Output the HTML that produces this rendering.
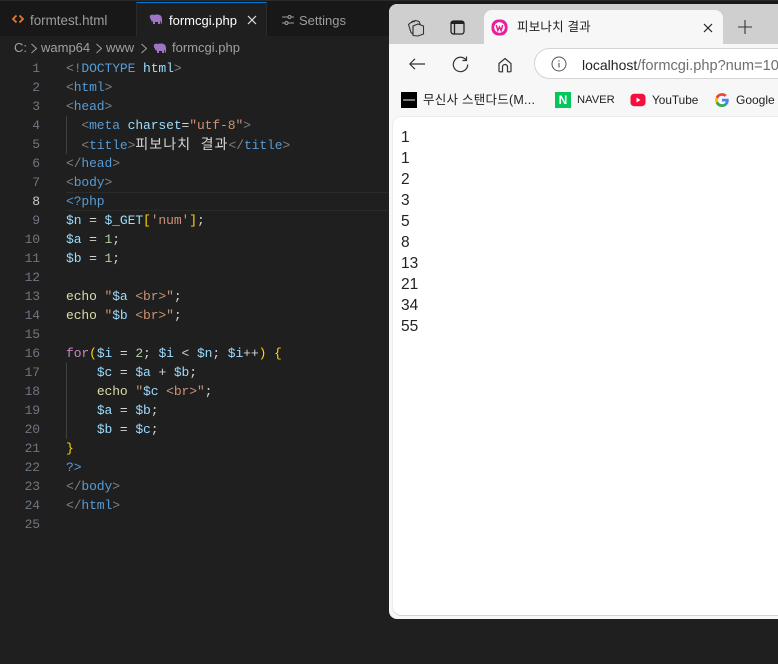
<!DOCTYPE html>
<html lang="ko">
<head>
<meta charset="utf-8">
<title>피보나치 결과</title>
<style>
html,body{margin:0;padding:0;background:#1f1f1f}
body{width:778px;height:664px;position:relative;overflow:hidden;font-family:"Liberation Sans","Noto Sans CJK KR",sans-serif}
.a{position:absolute;white-space:pre}
svg{position:absolute;display:block}
#tabbar{left:0;top:0;width:778px;height:36px;background:#181818;border-top:1px solid #2a2a2a;box-sizing:border-box}
#tab2{left:136px;top:2px;width:131px;height:34px;background:#1f1f1f;border-top:1px solid #0078d4;border-left:1px solid #2b2b2b;border-right:1px solid #2b2b2b;box-sizing:border-box}
.t{font-size:13px;line-height:18px;color:#9d9d9d}
.crumb{font-size:13px;line-height:18px;color:#a0a0a0}
.ln{position:absolute;left:0;width:40px;text-align:right;font:13px/19px "Liberation Mono",monospace;letter-spacing:-.1px;color:#6e7681}
.c{position:absolute;left:66px;font:13px/19px "Liberation Mono","Noto Sans CJK KR",monospace;letter-spacing:-.1px;white-space:pre;color:#cccccc}
.g{color:#808080}.b{color:#569cd6}.v{color:#9cdcfe}.s{color:#ce9178}.n{color:#b5cea8}.f{color:#dcdcaa}.k{color:#c586c0}.y{color:#ffd700}.w{color:#d4d4d4}.o{color:#da70d6}
.ko{font:14px/19px "Noto Sans CJK KR",sans-serif;letter-spacing:1.100px;word-spacing:4.300px;color:#d4d4d4}
#win{left:389px;top:4px;width:395px;height:615px;background:#f7f7f7;border-radius:8px 0 0 8px;overflow:hidden}
#strip{left:0;top:0;width:395px;height:40px;background:#cfcfcf}
#btab{left:95px;top:6px;width:239px;height:34px;background:#f7f7f7;border-radius:8px 8px 0 0}
#addr{left:145px;top:44px;width:260px;height:31px;background:#fff;border:1px solid #d4d4d4;border-radius:16px;box-sizing:border-box}
#page{left:4px;top:113px;width:400px;height:498px;background:#fff;border-radius:8px 0 0 8px;box-shadow:0 1px 0 #d4d4d4,-1px 0 0 #ececec,0 -1px 0 #ececec}
.bm{font-size:11.500px;line-height:16px;color:#1f1f1f}
#out{left:12px;top:123px;font-size:15.500px;line-height:21px;color:#222;white-space:pre}
</style>
</head>
<body>
<div class="a" id="tabbar"></div>
<div class="a" id="tab2"></div>

<svg style="left:12px;top:14px" width="12" height="10" viewBox="0 0 12 10"><path d="M4.500 1.500 1 5l3.500 3.500M7.500 1.500 11 5 7.500 8.500" fill="none" stroke="#e37933" stroke-width="1.800"/></svg>
<div class="a t" style="left:30px;top:12px;font-size:13.400px">formtest.html</div>

<svg style="left:149px;top:14px" width="14" height="11" viewBox="0 0 14 11"><path d="M1 1.500C3 .2 4 .5 5 1c2-.8 5-.8 6.500.5 1.300 1 1.500 3 1.500 5v3h-1V7l-.8.500V10H9V8H6v2H4V7.500C2.500 7.500 2 7 2 5.500 1 5 .5 3 1 1.500z" fill="#a074c4"/></svg>
<div class="a t" style="left:169px;top:12px;color:#fff">formcgi.php</div>
<svg style="left:247px;top:15px" width="10" height="10" viewBox="0 0 10 10"><path d="M1 1l8 8M9 1 1 9" stroke="#ddd" stroke-width="1.200"/></svg>

<svg style="left:282px;top:14px" width="12" height="12" viewBox="0 0 12 12"><path d="M0 3h6M9 3h3M0 9h3M6 9h6" stroke="#9d9d9d" stroke-width="1"/><circle cx="7.500" cy="3" r="1.500" fill="none" stroke="#9d9d9d"/><circle cx="4.500" cy="9" r="1.500" fill="none" stroke="#9d9d9d"/></svg>
<div class="a t" style="left:299px;top:12px">Settings</div>

<div class="a crumb" style="left:14px;top:39px">C:</div>
<svg style="left:30px;top:43px" width="8" height="11" viewBox="0 0 8 11"><path d="M1.500 1l5 4.500-5 4.500" fill="none" stroke="#a0a0a0"/></svg>
<div class="a crumb" style="left:41px;top:39px">wamp64</div>
<svg style="left:95px;top:43px" width="8" height="11" viewBox="0 0 8 11"><path d="M1.500 1l5 4.500-5 4.500" fill="none" stroke="#a0a0a0"/></svg>
<div class="a crumb" style="left:106px;top:39px">www</div>
<svg style="left:140px;top:43px" width="8" height="11" viewBox="0 0 8 11"><path d="M1.500 1l5 4.500-5 4.500" fill="none" stroke="#a0a0a0"/></svg>
<svg style="left:153px;top:43px" width="14" height="11" viewBox="0 0 14 11"><path d="M1 1.500C3 .2 4 .5 5 1c2-.8 5-.8 6.500.5 1.300 1 1.500 3 1.500 5v3h-1V7l-.8.500V10H9V8H6v2H4V7.500C2.500 7.500 2 7 2 5.500 1 5 .5 3 1 1.500z" fill="#a074c4"/></svg>
<div class="a crumb" style="left:172px;top:39px">formcgi.php</div>

<!-- current line and indent guides -->
<div class="a" style="left:66px;top:192px;width:330px;height:19px;box-sizing:border-box;border-top:1px solid #2b2b2b;border-bottom:1px solid #2b2b2b"></div>
<div class="a" style="left:66px;top:116px;width:1px;height:38px;background:#404040"></div>
<div class="a" style="left:66px;top:363px;width:1px;height:76px;background:#404040"></div>

<div class="ln" style="top:59px">1</div><div class="ln" style="top:78px">2</div><div class="ln" style="top:97px">3</div><div class="ln" style="top:116px">4</div><div class="ln" style="top:135px">5</div><div class="ln" style="top:154px">6</div><div class="ln" style="top:173px">7</div><div class="ln" style="top:192px;color:#ccc">8</div><div class="ln" style="top:211px">9</div><div class="ln" style="top:230px">10</div><div class="ln" style="top:249px">11</div><div class="ln" style="top:268px">12</div><div class="ln" style="top:287px">13</div><div class="ln" style="top:306px">14</div><div class="ln" style="top:325px">15</div><div class="ln" style="top:344px">16</div><div class="ln" style="top:363px">17</div><div class="ln" style="top:382px">18</div><div class="ln" style="top:401px">19</div><div class="ln" style="top:420px">20</div><div class="ln" style="top:439px">21</div><div class="ln" style="top:458px">22</div><div class="ln" style="top:477px">23</div><div class="ln" style="top:496px">24</div><div class="ln" style="top:515px">25</div>

<div class="c" style="top:59px"><span class="g">&lt;!</span><span class="b">DOCTYPE</span> <span class="v">html</span><span class="g">&gt;</span></div>
<div class="c" style="top:78px"><span class="g">&lt;</span><span class="b">html</span><span class="g">&gt;</span></div>
<div class="c" style="top:97px"><span class="g">&lt;</span><span class="b">head</span><span class="g">&gt;</span></div>
<div class="c" style="top:116px">  <span class="g">&lt;</span><span class="b">meta</span> <span class="v">charset</span><span class="w">=</span><span class="s">"utf-8"</span><span class="g">&gt;</span></div>
<div class="c" style="top:135px">  <span class="g">&lt;</span><span class="b">title</span><span class="g">&gt;</span><span class="ko">피보나치 결과</span><span class="g">&lt;/</span><span class="b">title</span><span class="g">&gt;</span></div>
<div class="c" style="top:154px"><span class="g">&lt;/</span><span class="b">head</span><span class="g">&gt;</span></div>
<div class="c" style="top:173px"><span class="g">&lt;</span><span class="b">body</span><span class="g">&gt;</span></div>
<div class="c" style="top:192px"><span class="b">&lt;?php</span></div>
<div class="c" style="top:211px"><span class="v">$n</span> <span class="w">=</span> <span class="v">$_GET</span><span class="y">[</span><span class="s">'num'</span><span class="y">]</span><span class="w">;</span></div>
<div class="c" style="top:230px"><span class="v">$a</span> <span class="w">=</span> <span class="n">1</span><span class="w">;</span></div>
<div class="c" style="top:249px"><span class="v">$b</span> <span class="w">=</span> <span class="n">1</span><span class="w">;</span></div>
<div class="c" style="top:287px"><span class="f">echo</span> <span class="s">"</span><span class="v">$a</span> <span class="s">&lt;br&gt;"</span><span class="w">;</span></div>
<div class="c" style="top:306px"><span class="f">echo</span> <span class="s">"</span><span class="v">$b</span> <span class="s">&lt;br&gt;"</span><span class="w">;</span></div>
<div class="c" style="top:344px"><span class="k">for</span><span class="y">(</span><span class="v">$i</span> <span class="w">=</span> <span class="n">2</span><span class="w">;</span> <span class="v">$i</span> <span class="w">&lt;</span> <span class="v">$n</span><span class="w">;</span> <span class="v">$i</span><span class="w">++</span><span class="y">)</span> <span class="y">{</span></div>
<div class="c" style="top:363px">    <span class="v">$c</span> <span class="w">=</span> <span class="v">$a</span> <span class="w">+</span> <span class="v">$b</span><span class="w">;</span></div>
<div class="c" style="top:382px">    <span class="f">echo</span> <span class="s">"</span><span class="v">$c</span> <span class="s">&lt;br&gt;"</span><span class="w">;</span></div>
<div class="c" style="top:401px">    <span class="v">$a</span> <span class="w">=</span> <span class="v">$b</span><span class="w">;</span></div>
<div class="c" style="top:420px">    <span class="v">$b</span> <span class="w">=</span> <span class="v">$c</span><span class="w">;</span></div>
<div class="c" style="top:439px"><span class="y">}</span></div>
<div class="c" style="top:458px"><span class="b">?&gt;</span></div>
<div class="c" style="top:477px"><span class="g">&lt;/</span><span class="b">body</span><span class="g">&gt;</span></div>
<div class="c" style="top:496px"><span class="g">&lt;/</span><span class="b">html</span><span class="g">&gt;</span></div>

<!-- browser window -->
<div class="a" id="win">
  <div class="a" id="strip"></div>
  <div class="a" id="btab"></div>

  <svg style="left:18px;top:15px" width="18" height="18" viewBox="0 0 18 18"><g fill="none" stroke="#333" stroke-width="1.100"><path d="M6 16.500 11 17 16.500 15V7L11 5 6 7z"/><path d="M6 7V15L4 13.500 1.500 5.500 6 2l2 1"/><path d="M3.800 3.800 8.500 1.500 12 2.500 13.500 6"/></g></svg>
  <svg style="left:61px;top:16px" width="15" height="15" viewBox="0 0 15 15"><rect x="1" y="1" width="13" height="13" rx="2.500" fill="none" stroke="#222" stroke-width="1.300"/><path d="M1.500 1.500h12v2.500H1.500z" fill="#222"/><path d="M4.500 3v11" stroke="#222" stroke-width="1.300"/></svg>

  <svg style="left:102px;top:15px" width="17" height="17" viewBox="0 0 17 17"><rect x=".5" y=".5" width="16" height="16" rx="7" fill="#e91e9c"/><path d="M8.500 3.200a5.300 5.300 0 1 0 .01 0z" fill="#fff"/><path d="M5.300 6 6.800 11.500 8.500 8 10.200 11.500 11.700 6" fill="none" stroke="#e91e9c" stroke-width="1.500"/></svg>
  <div class="a" style="left:128px;top:14px;font-size:12.500px;line-height:18px;color:#222;letter-spacing:.2px">피보나치 결과</div>
  <svg style="left:314px;top:19px" width="10" height="10" viewBox="0 0 10 10"><path d="M1 1l8 8M9 1 1 9" stroke="#222" stroke-width="1.200"/></svg>
  <svg style="left:349px;top:16px" width="14" height="14" viewBox="0 0 14 14"><path d="M7 0v14M0 7h14" stroke="#333" stroke-width="1.100"/></svg>

  <svg style="left:20px;top:54px" width="16" height="12" viewBox="0 0 16 12"><path d="M16 6H.8M6 .8.800 6 6 11.200" fill="none" stroke="#333" stroke-width="1.200"/></svg>
  <svg style="left:63px;top:52px" width="17" height="17" viewBox="0 0 17 17"><path d="M14 3.800A7.200 7.200 0 1 0 15.700 8.500" fill="none" stroke="#333" stroke-width="1.200"/><path d="M14.500 .5v4h-4" fill="none" stroke="#333" stroke-width="1.200"/></svg>
  <svg style="left:108px;top:53px" width="16" height="16" viewBox="0 0 16 16"><path d="M2 6.500 8 1.500l6 5V14a.8.800 0 0 1-.8.800H10.500V10a2.500 2.500 0 0 0-5 0v4.800H2.800A.8.800 0 0 1 2 14z" fill="none" stroke="#333" stroke-width="1.200"/></svg>

  <div class="a" id="addr"></div>
  <svg style="left:162px;top:52px" width="16" height="16" viewBox="0 0 16 16"><circle cx="8" cy="8" r="7" fill="none" stroke="#555" stroke-width="1"/><path d="M8 7v4.500M8 4.200v1.300" stroke="#555" stroke-width="1.100"/></svg>
  <div class="a" style="left:193px;top:52px;font-size:14.600px;line-height:18px;color:#6f6f6f"><span style="font-size:14px;color:#222">localhost</span>/formcgi.php?num=10</div>

  <div class="a" style="left:12px;top:88px;width:16px;height:16px;background:#000"></div>
  <div class="a" style="left:14px;top:95px;width:12px;height:2px;background:#777"></div>
  <div class="a bm" style="left:34px;top:88px;font-size:12.500px;letter-spacing:.25px">무신사 스탠다드(M...</div>
  <div class="a" style="left:166px;top:88px;width:16px;height:16px;background:#03c75a;color:#fff;font:bold 12px/16px 'Liberation Sans',sans-serif;text-align:center">N</div>
  <div class="a bm" style="left:188px;top:88px;font-size:11.200px">NAVER</div>
  <svg style="left:241px;top:89px" width="16" height="14" viewBox="0 0 16 14"><rect x=".5" y=".8" width="15" height="12.400" rx="3.500" fill="#f50f3f"/><path d="M6.500 4.500v5l4-2.500z" fill="#fff"/></svg>
  <div class="a bm" style="left:263px;top:88px;font-size:11.800px">YouTube</div>
  <svg style="left:326px;top:89px" width="14" height="14" viewBox="0 0 14 14"><path d="M13.700 7.200c0-.5 0-1-.1-1.400H7v2.700h3.800a3.200 3.200 0 0 1-1.400 2.100v1.700h2.300a6.800 6.800 0 0 0 2-5.100z" fill="#4285f4"/><path d="M7 14c1.900 0 3.400-.6 4.700-1.700L9.400 10.600a4.200 4.200 0 0 1-6.300-2.200H.8v1.800A7 7 0 0 0 7 14z" fill="#34a853"/><path d="M3.100 8.400a4.200 4.200 0 0 1 0-2.700V3.900H.8a7 7 0 0 0 0 6.300z" fill="#fbbc05"/><path d="M7 2.800c1 0 2 .4 2.700 1.100l2-2A7 7 0 0 0 .8 3.900l2.300 1.800A4.200 4.200 0 0 1 7 2.800z" fill="#ea4335"/></svg>
  <div class="a bm" style="left:347px;top:88px;font-size:12px">Google</div>

  <div class="a" id="page"></div>
  <div class="a" id="out">1
1
2
3
5
8
13
21
34
55</div>
</div>
</body>
</html>
